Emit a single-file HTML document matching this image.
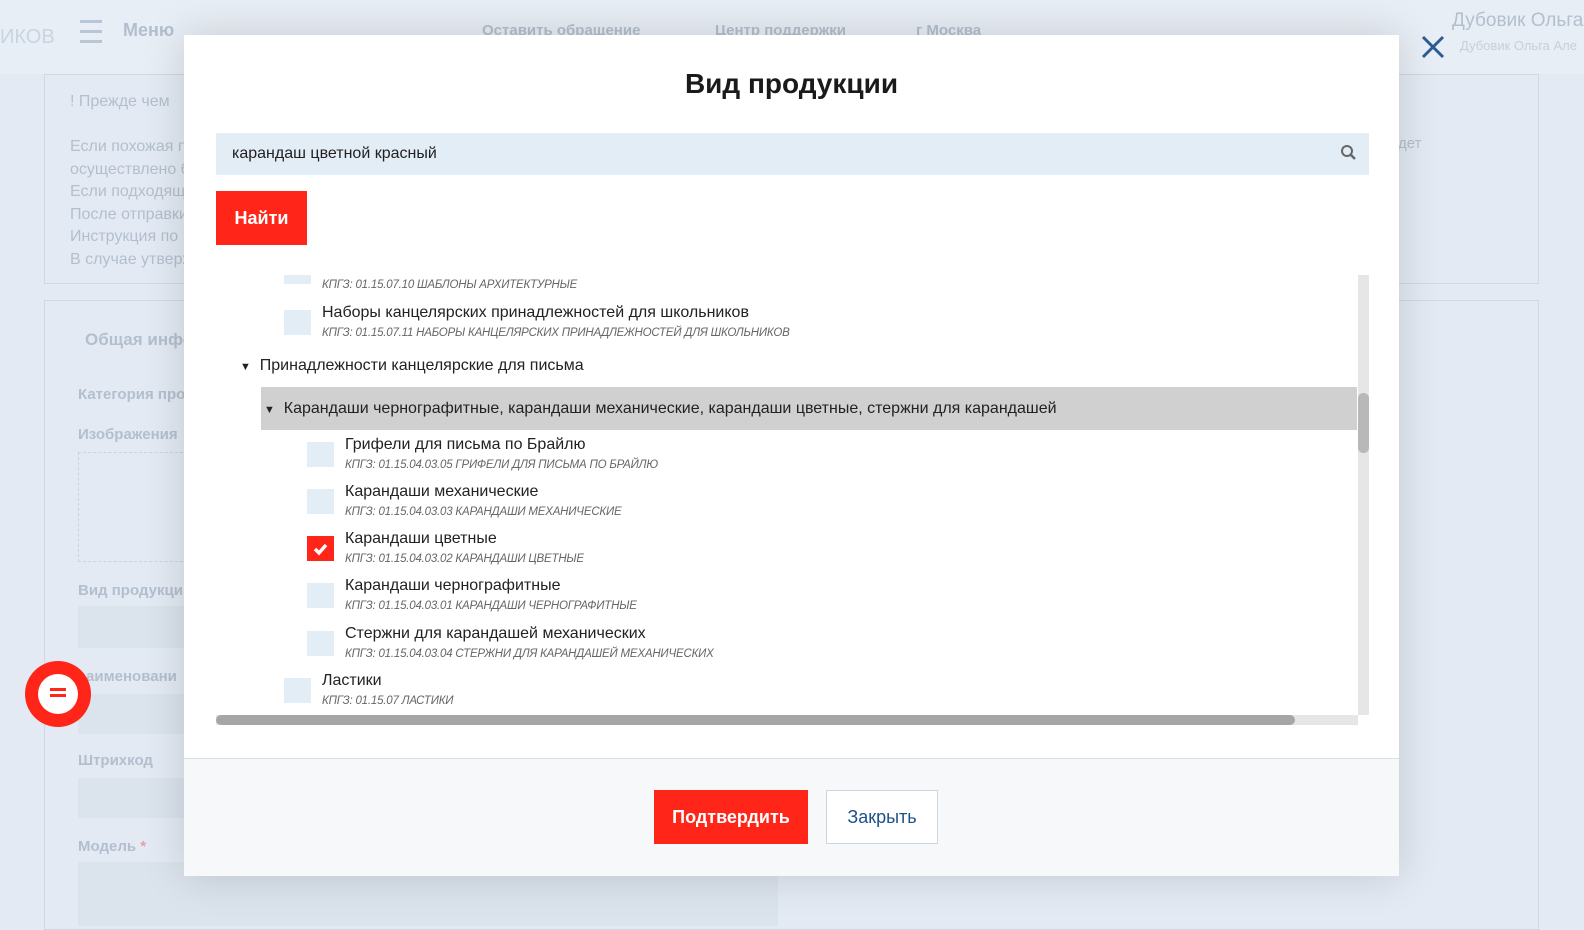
<!DOCTYPE html>
<html><head><meta charset="utf-8"><style>
*{margin:0;padding:0;box-sizing:border-box}
body{width:1584px;height:926px;overflow:hidden;background:#e3eaf3;font-family:"Liberation Sans","DejaVu Sans",sans-serif;position:relative}
.a{position:absolute}
.bg{color:#b3bfce;font-size:15px}
.hdr{left:0;top:0;width:1584px;height:74px;background:#e8eef5}
.modal{left:184px;top:35px;width:1215px;height:841px;background:#fff;box-shadow:0 0 40px rgba(0,0,0,.15)}
.cb{width:27px;height:25px;background:#e3edf6}
.t1{font-size:16px;color:#222}
.t2{font-size:11.5px;color:#666;font-style:italic;letter-spacing:-.2px}
</style></head><body>
<div class="a hdr"></div>
<div class="a bg" style="left:0;top:26px;font-size:20px;color:#c9d4e0">ИКОВ</div>
<div class="a" style="left:80px;top:20px;width:22px;height:3px;background:#b8c6d6;box-shadow:0 10px 0 #b8c6d6,0 20px 0 #b8c6d6"></div>
<div class="a bg" style="left:123px;top:20px;font-size:18px;font-weight:bold">Меню</div>
<div class="a bg" style="left:482px;top:22px;font-weight:bold">Оставить обращение</div>
<div class="a bg" style="left:715px;top:22px;font-weight:bold">Центр поддержки</div>
<div class="a bg" style="left:916px;top:22px;font-weight:bold">г Москва</div>
<div class="a bg" style="left:1452px;top:10px;font-size:19px">Дубовик Ольга</div>
<div class="a bg" style="left:1460px;top:38px;font-size:13px;color:#c5d0dc">Дубовик Ольга Але</div>
<div class="a" style="left:44px;top:74px;width:1495px;height:210px;border:1px solid #d0d8e2"></div>
<div class="a bg" style="left:70px;top:91px;font-size:16px;line-height:22.5px">! Прежде чем<br><br>Если похожая п<br>осуществлено б<br>Если подходящ<br>После отправки<br>Инструкция по<br>В случае утверж</div>
<div class="a bg" style="left:1398px;top:135px;font-size:15px">дет</div>
<div class="a" style="left:44px;top:300px;width:1495px;height:630px;border:1px solid #d0d8e2"></div>
<div class="a bg" style="left:85px;top:330px;font-size:17px;font-weight:bold">Общая инфо</div>
<div class="a bg" style="left:78px;top:385px;font-weight:bold;line-height:20px">Категория про<br><br>Изображения</div>
<div class="a" style="left:78px;top:452px;width:110px;height:110px;border:1px dashed #c8d2de"></div>
<div class="a bg" style="left:78px;top:582px;font-weight:bold">Вид продукци</div>
<div class="a" style="left:78px;top:606px;width:110px;height:42px;background:#dbe3ec"></div>
<div class="a bg" style="left:86px;top:668px;font-weight:bold">аименовани</div>
<div class="a" style="left:78px;top:694px;width:110px;height:40px;background:#dbe3ec"></div>
<div class="a bg" style="left:78px;top:752px;font-weight:bold">Штрихкод</div>
<div class="a" style="left:78px;top:778px;width:110px;height:40px;background:#dbe3ec"></div>
<div class="a bg" style="left:78px;top:838px;font-weight:bold">Модель <span style="color:#e9a0a0">*</span></div>
<div class="a" style="left:78px;top:862px;width:700px;height:64px;background:#dbe3ec"></div>
<div class="a" style="left:25px;top:661px;width:66px;height:66px;border-radius:50%;background:#ff2519"></div>
<div class="a" style="left:38px;top:674px;width:40px;height:40px;border-radius:50%;background:#fff"></div>
<div class="a" style="left:50px;top:688px;width:16px;height:3px;background:#ff2519;box-shadow:0 6px 0 #ff2519"></div>
<svg class="a" style="left:1420px;top:34px" width="26" height="26"><path d="M3 3L23 23M23 3L3 23" stroke="#2b5d93" stroke-width="3"/></svg>

<div class="a modal">
<div class="a" style="left:0;width:1215px;top:33px;text-align:center;font-size:28px;font-weight:bold;color:#1a1a1a">Вид продукции</div>
<div class="a" style="left:32px;top:98px;width:1153px;height:42px;background:#e3edf6"></div>
<div class="a" style="left:48px;top:110px;font-size:16px;color:#222">карандаш цветной красный</div>
<svg class="a" style="left:1156px;top:109px" width="18" height="18"><circle cx="7" cy="7" r="5" stroke="#666" stroke-width="2" fill="none"/><path d="M11 11L15 15" stroke="#666" stroke-width="2.5"/></svg>
<div class="a" style="left:32px;top:156px;width:91px;height:54px;background:#ff2519;color:#fff;font-weight:bold;font-size:18px;text-align:center;line-height:54px">Найти</div>

<div class="a" style="left:0;top:240px;width:1215px;height:452px;overflow:hidden">
<div class="a cb" style="left:100px;top:-10px;height:19px"></div>
<div class="a t2" style="left:138px;top:4px">КПГЗ: 01.15.07.10 ШАБЛОНЫ АРХИТЕКТУРНЫЕ</div>
<div class="a cb" style="left:100px;top:35px"></div>
<div class="a t1" style="left:138px;top:29px">Наборы канцелярских принадлежностей для школьников</div>
<div class="a t2" style="left:138px;top:52px">КПГЗ: 01.15.07.11 НАБОРЫ КАНЦЕЛЯРСКИХ ПРИНАДЛЕЖНОСТЕЙ ДЛЯ ШКОЛЬНИКОВ</div>
<div class="a t1" style="left:56px;top:82px"><span style="font-size:11px">▼</span>&nbsp; Принадлежности канцелярские для письма</div>
<div class="a" style="left:77px;top:112px;width:1096px;height:43px;background:#d0d0d0"></div>
<div class="a t1" style="left:80px;top:125px"><span style="font-size:11px">▼</span>&nbsp; Карандаши чернографитные, карандаши механические, карандаши цветные, стержни для карандашей</div>
<div class="a cb" style="left:123px;top:167px"></div>
<div class="a t1" style="left:161px;top:161px">Грифели для письма по Брайлю</div>
<div class="a t2" style="left:161px;top:184px">КПГЗ: 01.15.04.03.05 ГРИФЕЛИ ДЛЯ ПИСЬМА ПО БРАЙЛЮ</div>
<div class="a cb" style="left:123px;top:214px"></div>
<div class="a t1" style="left:161px;top:208px">Карандаши механические</div>
<div class="a t2" style="left:161px;top:231px">КПГЗ: 01.15.04.03.03 КАРАНДАШИ МЕХАНИЧЕСКИЕ</div>
<div class="a cb" style="left:123px;top:261px;background:#ff2519"><svg width="27" height="25"><path d="M8 13L12 17L19 9" stroke="#fff" stroke-width="3.5" fill="none"/></svg></div>
<div class="a t1" style="left:161px;top:255px">Карандаши цветные</div>
<div class="a t2" style="left:161px;top:278px">КПГЗ: 01.15.04.03.02 КАРАНДАШИ ЦВЕТНЫЕ</div>
<div class="a cb" style="left:123px;top:308px"></div>
<div class="a t1" style="left:161px;top:302px">Карандаши чернографитные</div>
<div class="a t2" style="left:161px;top:325px">КПГЗ: 01.15.04.03.01 КАРАНДАШИ ЧЕРНОГРАФИТНЫЕ</div>
<div class="a cb" style="left:123px;top:356px"></div>
<div class="a t1" style="left:161px;top:350px">Стержни для карандашей механических</div>
<div class="a t2" style="left:161px;top:373px">КПГЗ: 01.15.04.03.04 СТЕРЖНИ ДЛЯ КАРАНДАШЕЙ МЕХАНИЧЕСКИХ</div>
<div class="a cb" style="left:100px;top:403px"></div>
<div class="a t1" style="left:138px;top:397px">Ластики</div>
<div class="a t2" style="left:138px;top:420px">КПГЗ: 01.15.07 ЛАСТИКИ</div>
<div class="a" style="left:1174px;top:0;width:11px;height:440px;background:#e6e6e6"></div>
<div class="a" style="left:1174px;top:118px;width:11px;height:60px;background:#b8b8b8;border-radius:5px"></div>
<div class="a" style="left:32px;top:440px;width:1142px;height:10px;background:#e6e6e6"></div>
<div class="a" style="left:32px;top:440px;width:1079px;height:10px;background:#a6a6a6;border-radius:5px"></div>
</div>

<div class="a" style="left:0;top:723px;width:1215px;height:118px;background:#f6f8fa;border-top:1px solid #d8dee5"></div>
<div class="a" style="left:470px;top:755px;width:154px;height:54px;background:#ff2519;color:#fff;font-weight:bold;font-size:18px;text-align:center;line-height:54px">Подтвердить</div>
<div class="a" style="left:642px;top:755px;width:112px;height:54px;background:#fff;border:1px solid #cbd7e3;color:#1f5189;font-size:18px;text-align:center;line-height:52px">Закрыть</div>
</div>
</body></html>
